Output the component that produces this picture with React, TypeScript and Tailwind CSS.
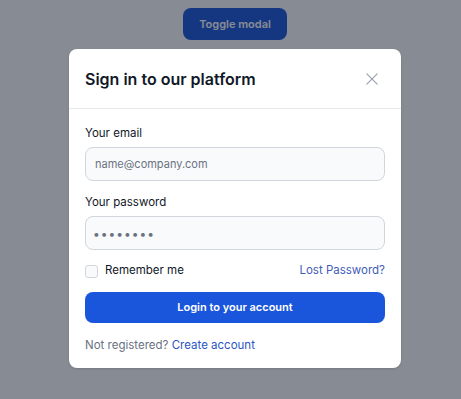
import React from "react";

export default function App() {
  return (
    <div
      className="relative w-[461px] h-[399px] bg-white overflow-hidden"
      style={{ fontFamily: "Inter, 'Noto Sans', sans-serif" }}
    >
      <div className="flex pt-2 pl-[183px]">
        <button className="w-[104px] h-[32px] rounded-lg bg-[#1a56db] text-white text-[11px] font-semibold">
          Toggle modal
        </button>
      </div>
      <div className="absolute inset-0 bg-gray-900/50" />
      <div className="absolute left-[69px] top-[49px] w-[332px] h-[319px] rounded-lg bg-white shadow-sm flex flex-col">
        <div className="h-[60px] border-b border-gray-200 flex items-center justify-between pl-4 pr-[17px]">
          <h3 className="text-[16px] font-semibold text-gray-900">Sign in to our platform</h3>
          <button className="w-6 h-6 flex items-center justify-center text-gray-400">
            <svg width="12" height="12" viewBox="0 0 14 14" fill="none">
              <path d="M1 1l12 12M13 1L1 13" stroke="currentColor" strokeWidth="1.4" strokeLinecap="round" />
            </svg>
          </button>
        </div>
        <div className="px-4 pt-4 flex flex-col">
          <label className="text-[11.5px] leading-4 font-normal text-gray-900 mb-1.5">Your email</label>
          <input
            type="email"
            placeholder="name@company.com"
            className="h-[34px] w-full rounded-lg border border-gray-300 bg-gray-50 px-[9px] text-[11px] text-gray-900 placeholder:text-gray-500 outline-none"
          />
          <label className="mt-[13px] text-[11.5px] leading-4 font-normal text-gray-900 mb-1.5">Your password</label>
          <input
            type="password"
            defaultValue="password"
            readOnly
            className="h-[34px] w-full rounded-lg border border-gray-300 bg-gray-50 px-[7px] text-[12px] text-gray-500 tracking-[1px] outline-none"
          />
          <div className="mt-[13px] h-4 flex items-center justify-between">
            <label className="flex items-center gap-[7px] text-[11.5px] font-normal text-gray-900">
              <span className="w-[13px] h-[13px] rounded-[3px] border border-gray-300 bg-gray-50" />
              Remember me
            </label>
            <a className="text-[11.5px] font-normal text-[#3f5cb8]">Lost Password?</a>
          </div>
          <button className="mt-[13px] h-[31px] w-full rounded-lg bg-[#1a56db] text-white text-[11px] font-semibold">
            Login to your account
          </button>
          <div className="mt-[14px] text-[11.5px] leading-4 font-normal text-gray-500">
            Not registered? <a className="text-[#2c55c4]">Create account</a>
          </div>
        </div>
      </div>
    </div>
  );
}
